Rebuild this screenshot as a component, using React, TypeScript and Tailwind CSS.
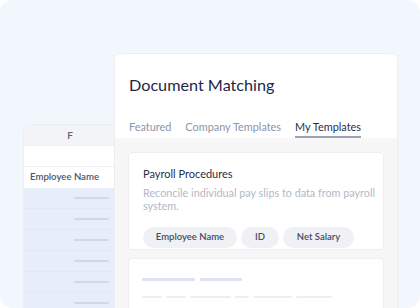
import React from 'react';

const font = { fontFamily: 'Lato, "Noto Sans", sans-serif' };

// строки таблицы слева
const rows = [0, 1, 2, 3, 4, 5];
const chips = [
  { label: 'Employee Name', w: 'w-[94px]' },
  { label: 'ID', w: 'w-[38px]' },
  { label: 'Net Salary', w: 'w-[71px]' },
];
const greyBars = ['w-[20px]', 'w-[20px]', 'w-[41px]', 'w-[14px]', 'w-[39px]', 'w-[36px]'];

function SheetCard() {
  return (
    <div className="absolute left-[23px] top-[124px] w-[110px] h-[200px] bg-white rounded-tl-[8px] border border-[#eceef3] overflow-hidden">
      <div className="h-[21px] w-[92px] bg-[#f3f4f7] flex items-center justify-center text-[10px] text-[#5b6272] font-semibold border-b border-[#eceef3]">
        F
      </div>
      <div className="h-[21px] border-b border-[#eef0f4]" />
      <div className="h-[21px] flex items-center pl-[6px] text-[9.6px] font-semibold text-[#4d5567] whitespace-nowrap">
        Employee Name
      </div>
      <div className="bg-[#e7eefa]">
        {rows.map((r) => (
          <div key={r} className="h-[21px] w-[92px] flex items-center justify-end pr-[7px] border-b border-[#e1e8f5]">
            <div className="w-[35px] h-[2px] bg-[#d3d9e4] rounded-full" />
          </div>
        ))}
      </div>
    </div>
  );
}

function MainCard() {
  return (
    <div className="absolute left-[114px] top-[53px] w-[284px] h-[270px] bg-[#f7f7f8] rounded-t-[7px] border border-[#eceef2] overflow-hidden">
      <div className="bg-white px-[14px]">
        <div className="pt-[18px] text-[16.2px] leading-[26px] text-[#1c2748] whitespace-nowrap">Document Matching</div>
        <div className="flex gap-[14px] mt-[22px] text-[10.9px] leading-[14px] whitespace-nowrap">
          <div className="text-[#8c95a8] pb-[4px]">Featured</div>
          <div className="text-[#8c95a8] pb-[4px]">Company Templates</div>
          <div className="text-[#27304a] pb-[2px] border-b-2 border-[#9aa3b6]">My Templates</div>
        </div>
      </div>
      <div className="px-[13px] pt-[14px] flex flex-col gap-[8px]">
        <div className="bg-white rounded-[4px] border border-[#efeff2] h-[98px] pl-[14px] pt-[13px]">
          <div className="text-[11px] leading-[16px] text-[#27304a]">Payroll Procedures</div>
          <div className="text-[10.8px] leading-[13px] text-[#b2b8c7] mt-[3.5px] pr-[2px]">
            Reconcile individual pay slips to data from payroll system.
          </div>
          <div className="flex gap-[4px] mt-[15.5px]">
            {chips.map((c) => (
              <div key={c.label} className={`${c.w} h-[21px] rounded-full bg-[#f0f1f4] flex items-center justify-center text-[9.5px] font-semibold text-[#454d63]`}>
                {c.label}
              </div>
            ))}
          </div>
        </div>
        <div className="bg-white rounded-[4px] border border-[#efeff2] h-[80px] pl-[13px] pt-[19px]">
          <div className="flex gap-[5px]">
            <div className="w-[53px] h-[2.5px] bg-[#dde1f2] rounded-full" />
            <div className="w-[42px] h-[2.5px] bg-[#dde1f2] rounded-full" />
          </div>
          <div className="flex gap-[4px] mt-[15px]">
            {greyBars.map((w, i) => (
              <div key={i} className={`${w} h-[2.5px] bg-[#eceef2] rounded-full`} />
            ))}
          </div>
        </div>
      </div>
    </div>
  );
}

export default function App() {
  return (
    <div className="w-[420px] h-[308px] bg-white" style={font}>
      <div className="relative w-[420px] h-[308px] rounded-[13px] bg-[#f2f6fd] overflow-hidden">
        <SheetCard />
        <MainCard />
      </div>
    </div>
  );
}
